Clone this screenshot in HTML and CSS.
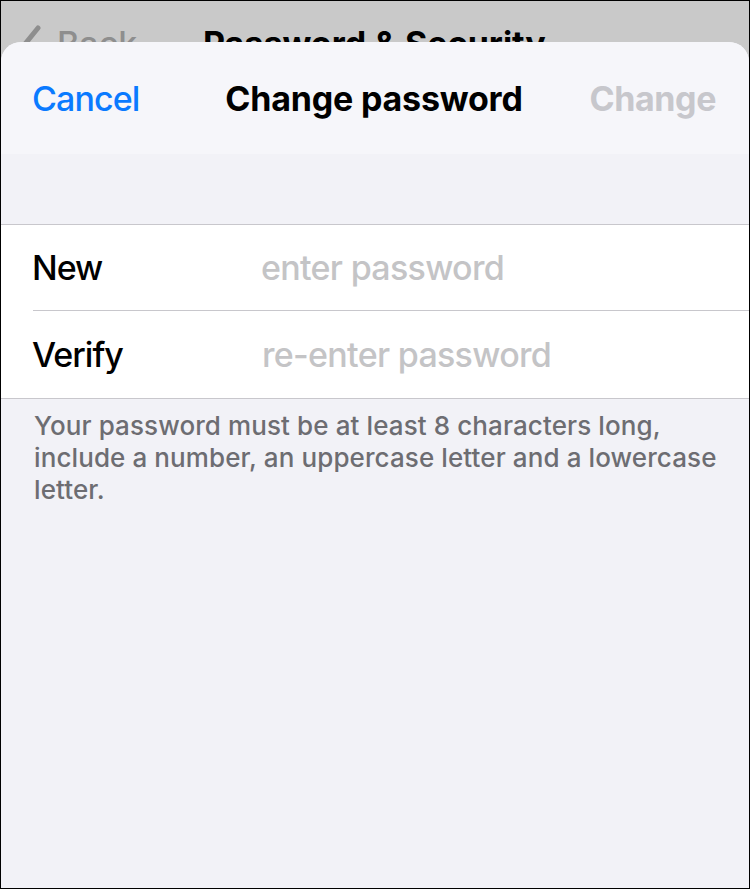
FILE: index.html
```html
<!DOCTYPE html>
<html lang="en">
<head>
<meta charset="utf-8">
<title>Change password</title>
<link rel="stylesheet" href="styles.css">
</head>
<body>
<div class="frame">
  <div class="behind">
    <div class="behind-back">
      <svg class="chev" width="22" height="40" viewBox="0 0 22 40"><path d="M17 4 L4 20 L17 36" fill="none" stroke="#8e8e8e" stroke-width="5" stroke-linecap="round" stroke-linejoin="round"/></svg>
      <span>Back</span>
    </div>
    <div class="behind-title">Password &amp; Security</div>
  </div>
  <div class="sheet">
    <div class="sheet-header">
      <span class="cancel">Cancel</span>
      <span class="title">Change password</span>
      <span class="change">Change</span>
    </div>
    <div class="spacer"></div>
    <div class="group">
      <div class="row row-first">
        <span class="label">New</span>
        <span class="placeholder">enter password</span>
      </div>
      <div class="row">
        <span class="label">Verify</span>
        <span class="placeholder">re-enter password</span>
      </div>
    </div>
    <p class="footer">Your password must be at least 8 characters long, include a number, an uppercase letter and a lowercase letter.</p>
  </div>
</div>
</body>
</html>
```
FILE: styles.css
```css
html, body {
  margin: 0;
  padding: 0;
}
body {
  font-family: Inter, "Noto Sans", "Liberation Sans", sans-serif;
  background: #fff;
}
.frame {
  width: 750px;
  height: 889px;
  box-sizing: border-box;
  border: 1px solid #000;
  background: #c9c9c9;
  display: flex;
  flex-direction: column;
  overflow: hidden;
}
.behind {
  height: 41px;
  flex: none;
  overflow: hidden;
  display: flex;
  align-items: flex-start;
  padding-top: 22px;
  box-sizing: border-box;
}
.behind-back {
  display: flex;
  align-items: center;
  gap: 14px;
  padding-left: 20px;
  color: #8e8e8e;
  font-size: 34px;
  font-weight: 500;
  width: 182px;
}
.chev {
  flex: none;
}
.behind-title {
  font-size: 34px;
  font-weight: 700;
  color: #000;
  letter-spacing: 0px;
}
.sheet {
  flex: 1;
  background: #f2f2f7;
  border-radius: 20px 20px 0 0;
  overflow: hidden;
  display: flex;
  flex-direction: column;
}
.sheet-header {
  height: 112px;
  flex: none;
  background: #f6f6fa;
  display: grid;
  grid-template-columns: 1fr auto 1fr;
  align-items: center;
  padding: 0 33px 0 31px;
  font-size: 34px;
  font-weight: 500;
  letter-spacing: -0.9px;
}
.cancel {
  color: #0a7aff;
  justify-self: start;
}
.title {
  font-weight: 700;
  color: #000;
  letter-spacing: -0.2px;
}
.change {
  color: #c7c7cc;
  font-weight: 700;
  justify-self: end;
  letter-spacing: -0.4px;
}
.spacer {
  height: 70px;
  flex: none;
}
.group {
  background: #fff;
  border-top: 1px solid #c8c7cc;
  border-bottom: 1px solid #c8c7cc;
}
.row {
  height: 87px;
  display: flex;
  align-items: center;
  padding-left: 31px;
  font-size: 34px;
  font-weight: 500;
  letter-spacing: -0.7px;
  box-sizing: border-box;
}
.row-first {
  height: 86px;
  border-bottom: 1px solid #c8c7cc;
  margin-left: 32px;
  padding-left: 0;
}
.row-first .label {
  width: 229px;
  margin-left: -1px;
}
.label {
  width: 230px;
  flex: none;
  color: #000;
  letter-spacing: -1px;
}
.placeholder {
  color: #c4c4c6;
}
.footer {
  margin: 0;
  padding: 11px 20px 0 33px;
  font-size: 26px;
  font-weight: 500;
  line-height: 32px;
  color: #6d6d72;
  letter-spacing: 0.1px;
}
```
